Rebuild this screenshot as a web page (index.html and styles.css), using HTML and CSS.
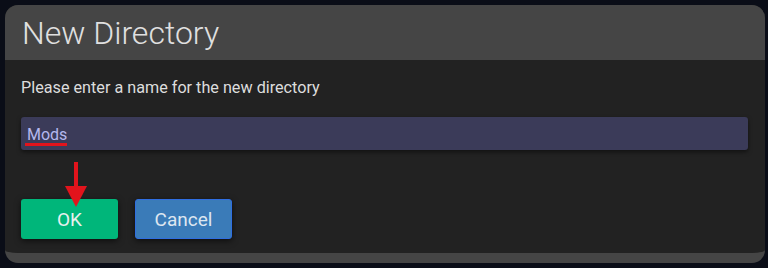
FILE: index.html
```html
<!DOCTYPE html>
<html>
<head>
<meta charset="utf-8">
<link rel="stylesheet" href="styles.css">
</head>
<body>
<div class="dialog">
  <div class="header"><h1 class="title">New Directory</h1></div>
  <div class="content">
    <p class="prompt">Please enter a name for the new directory</p>
    <div class="field">
      <span class="value">Mods</span>
      <span class="mark"></span>
    </div>
    <div class="actions">
      <button class="btn ok">OK</button>
      <button class="btn cancel">Cancel</button>
      <svg class="arrow" width="24" height="46" viewBox="0 0 24 46">
        <rect x="10" y="0" width="4" height="26" fill="#e2141c"/>
        <polygon points="1,24 23,24 12,45" fill="#e2141c"/>
      </svg>
    </div>
  </div>
</div>
</body>
</html>
```
FILE: styles.css
```css
html, body {
  margin: 0;
  padding: 0;
  background: #0a0d17;
  font-family: Roboto, "Liberation Sans", sans-serif;
}
.dialog {
  margin: 5px 0 0 5px;
  width: 760px;
  height: 248px;
  background: #222;
  border-bottom: 10px solid #454545;
  border-radius: 13px;
  overflow: hidden;
}
.header {
  height: 55px;
  background: #454545;
  display: flex;
  align-items: center;
  padding-left: 17px;
}
.title {
  margin: 0;
  font-size: 32px;
  font-weight: 300;
  color: #e0e0e0;
  line-height: 1;
}
.content {
  padding: 0 17px 0 16px;
}
.prompt {
  margin: 0;
  padding-top: 18px;
  font-size: 16.2px;
  line-height: 20px;
  color: #ddd;
}
.field {
  position: relative;
  margin-top: 19px;
  height: 33px;
  background: #3b3b59;
  border-radius: 3px;
  box-shadow: 0 2px 4px rgba(0, 0, 0, 0.5);
  display: flex;
  align-items: center;
  padding-left: 6px;
}
.value {
  font-size: 16px;
  color: #b4b8ee;
  position: relative;
  top: 1px;
}
.mark {
  position: absolute;
  left: 4px;
  top: 26px;
  width: 42px;
  height: 3px;
  background: #e2141c;
}
.actions {
  position: relative;
  margin-top: 49px;
  display: flex;
  gap: 17px;
}
.btn {
  width: 97px;
  height: 40px;
  border: none;
  border-radius: 3px;
  font-family: Roboto, "Liberation Sans", sans-serif;
  font-size: 19px;
  color: #e8f0ee;
  box-shadow: 0 2px 6px rgba(0, 0, 0, 0.6);
  padding: 0;
}
.ok {
  background: #00b67a;
}
.cancel {
  background: #3a7bb8;
  border: 1px solid #2f6ee0;
  color: #dde6f0;
}
.arrow {
  position: absolute;
  left: 43px;
  top: -37px;
}
```
